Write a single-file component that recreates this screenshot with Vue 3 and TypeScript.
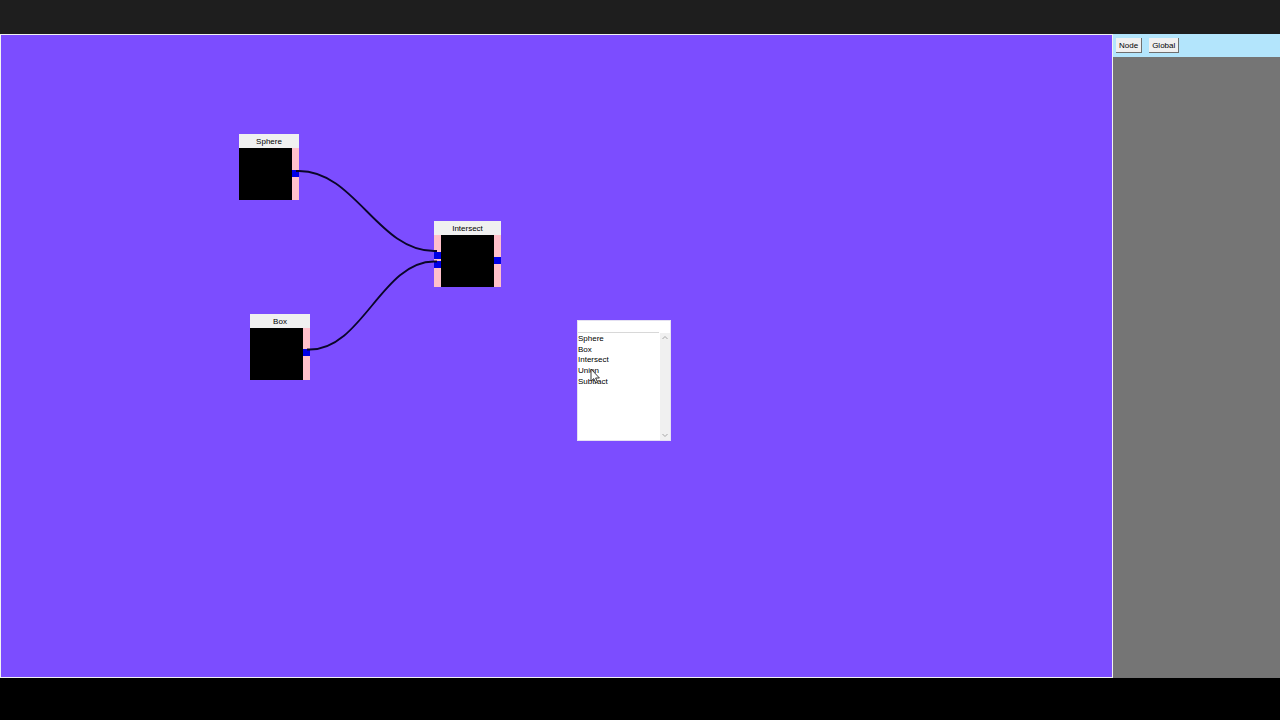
<script setup lang="ts">
interface GraphNode {
  name: string
  x: number
  y: number
  w: number
  inputs: number[]
  outputs: number[]
}

const nodes: GraphNode[] = [
  { name: 'Sphere', x: 238, y: 99, w: 60, inputs: [], outputs: [22] },
  { name: 'Box', x: 249, y: 279, w: 60, inputs: [], outputs: [21] },
  { name: 'Intersect', x: 433, y: 186, w: 67, inputs: [17, 26], outputs: [22] },
]

const wires: string[] = [
  'M 295 136 L 298 136 C 354 136, 377 216, 433 216 L 436 216',
  'M 306 314.5 L 309 314.5 C 361 314.5, 381 226.5, 433 226.5 L 436 226.5',
]

const items: string[] = ['Sphere', 'Box', 'Intersect', 'Union', 'Subtract']
const tabs: string[] = ['Node', 'Global']
</script>

<template>
  <div class="screen">
    <div class="topbar"></div>
    <div class="workspace">
      <div class="canvas">
        <div
          v-for="n in nodes"
          :key="n.name"
          class="node"
          :style="{ left: n.x + 'px', top: n.y + 'px', width: n.w + 'px' }"
        >
          <div class="node-title">{{ n.name }}</div>
          <div class="node-body">
            <div v-if="n.inputs.length" class="rail">
              <span v-for="p in n.inputs" :key="p" class="port" :style="{ top: p + 'px' }"></span>
            </div>
            <div class="node-view"></div>
            <div class="rail">
              <span v-for="p in n.outputs" :key="p" class="port" :style="{ top: p + 'px' }"></span>
            </div>
          </div>
        </div>

        <svg class="wires" width="1111" height="642" viewBox="0 0 1111 642">
          <path v-for="(d, i) in wires" :key="i" :d="d" class="wire" />
        </svg>

        <div class="picker">
          <div class="picker-title"></div>
          <div class="picker-main">
            <ul class="picker-list">
              <li v-for="item in items" :key="item">{{ item }}</li>
            </ul>
            <div class="scrollbar">
              <svg width="10" height="6" viewBox="0 0 10 6"><path d="M2.5 4 L5 1.5 L7.5 4" class="chev" /></svg>
              <svg width="10" height="6" viewBox="0 0 10 6"><path d="M2.5 2 L5 4.5 L7.5 2" class="chev" /></svg>
            </div>
          </div>
          <svg class="cursor" width="12" height="17" viewBox="0 0 12 17">
            <path d="M1 1 L1 13 L3.8 10.6 L5.8 15 L7.6 14.2 L5.6 10 L9.4 10 Z" fill="#fff" stroke="#222" stroke-width="0.9" />
          </svg>
        </div>
      </div>

      <aside class="panel">
        <div class="tabs">
          <button v-for="t in tabs" :key="t" class="tab" type="button">{{ t }}</button>
        </div>
        <div class="panel-body"></div>
      </aside>
    </div>
    <div class="footer"></div>
  </div>
</template>

<style>
html, body {
  margin: 0;
  background: #000;
}
</style>

<style scoped>
.screen {
  width: 1280px;
  height: 720px;
  display: flex;
  flex-direction: column;
  overflow: hidden;
  background: #000;
  font-family: "Liberation Sans", "DejaVu Sans", sans-serif;
}
.topbar {
  height: 34px;
  background: #1e1e1e;
}
.workspace {
  height: 644px;
  display: flex;
}
.canvas {
  position: relative;
  width: 1111px;
  height: 642px;
  border: 1px solid #f2f2f2;
  background: #7c4dff;
}
.wires {
  position: absolute;
  inset: 0;
  pointer-events: none;
}
.wire {
  fill: none;
  stroke: #0a0628;
  stroke-width: 1.8;
}
.node {
  position: absolute;
  height: 66px;
  display: flex;
  flex-direction: column;
}
.node-title {
  height: 14px;
  background: #f0f0f0;
  color: #000;
  font-size: 8px;
  line-height: 15px;
  text-align: center;
}
.node-body {
  flex: 1;
  display: flex;
}
.node-view {
  flex: 1;
  background: #000;
}
.rail {
  position: relative;
  width: 7px;
  background: #ffc0cb;
}
.port {
  position: absolute;
  left: 0;
  width: 7px;
  height: 7px;
  background: #0000e6;
}
.picker {
  position: absolute;
  left: 576px;
  top: 285px;
  width: 94px;
  height: 121px;
  box-sizing: border-box;
  border: 1px solid #e4e0f2;
  background: #fff;
  display: flex;
  flex-direction: column;
}
.picker-title {
  height: 11px;
  flex: none;
}
.picker-main {
  flex: 1;
  display: flex;
  min-height: 0;
}
.picker-list {
  flex: 1;
  margin: 0 1px 0 0;
  padding: 1px 0 0;
  list-style: none;
  border-top: 1px solid #d8d8d8;
  font-size: 8px;
  color: #000;
}
.picker-list li {
  height: 10.7px;
  line-height: 10.7px;
}
.scrollbar {
  width: 10px;
  margin-top: 1px;
  background: #f0f0f0;
  display: flex;
  flex-direction: column;
  justify-content: space-between;
  padding: 2px 0;
  box-sizing: border-box;
}
.chev {
  fill: none;
  stroke: #a6a6a6;
  stroke-width: 1;
}
.cursor {
  position: absolute;
  left: 12px;
  top: 47px;
}
.panel {
  width: 167px;
  display: flex;
  flex-direction: column;
}
.tabs {
  height: 23px;
  flex: none;
  box-sizing: border-box;
  padding: 4px 0 0 3px;
  display: flex;
  align-items: flex-start;
  gap: 7px;
  background: #b3e5fc;
}
.tab {
  height: 15px;
  padding: 0 3px;
  border: none;
  border-right: 1px solid #6f6f6f;
  border-bottom: 1px solid #6f6f6f;
  background: #f0f0f0;
  color: #000;
  font-family: inherit;
  font-size: 8px;
  line-height: 15px;
}
.panel-body {
  flex: 1;
  background: #757575;
}
.footer {
  flex: 1;
  background: #000;
}
</style>
